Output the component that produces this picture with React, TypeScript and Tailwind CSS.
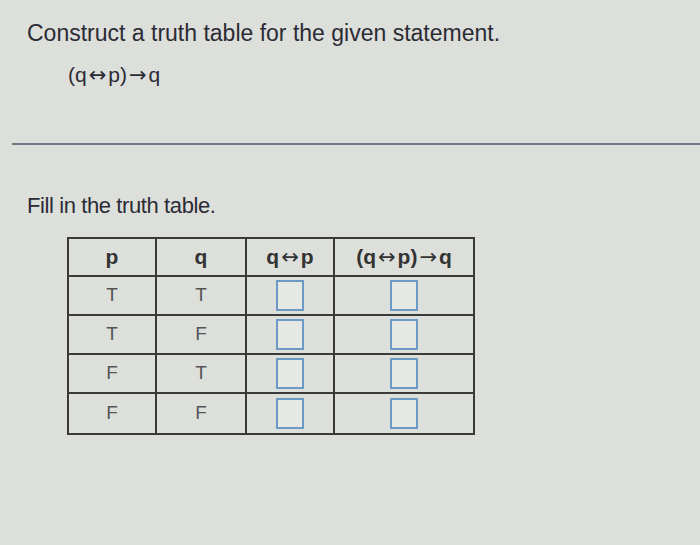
import React from "react";

const rows: [string, string][] = [
  ["T", "T"],
  ["T", "F"],
  ["F", "T"],
  ["F", "F"],
];

function A({ c }: { c: string }) {
  return (
    <span style={{ fontFamily: '"DejaVu Sans", sans-serif' }} className="mx-[2px] font-normal">
      {c}
    </span>
  );
}

function Box() {
  return <div className="w-[28px] h-[31px] border-2 border-[#6c9ac6] bg-[#e6e8e4]" />;
}

export default function App() {
  return (
    <div
      className="w-[700px] h-[545px] bg-[#dddfdb] text-[#2b2b35] overflow-hidden"
      style={{ fontFamily: '"Liberation Sans", Arial, sans-serif' }}
    >
      <div className="pt-[19px] pl-[27px] text-[23px] leading-[28px]">
        Construct a truth table for the given statement.
      </div>
      <div className="pl-[68px] pt-[16px] text-[21px] leading-[24px]">
        (q<A c="↔" />p)<A c="→" />q
      </div>
      <div className="mt-[56px] ml-[12px] h-[2px] bg-[#6f7684]" />
      <div className="pl-[27px] pt-[49px] text-[22px] leading-[24px] tracking-[-0.4px]">
        Fill in the truth table.
      </div>
      <div className="pl-[67px] pt-[19px]">
        <div className="w-[408px] border-2 border-[#3a3a3a]">
          <div className="grid grid-cols-[88px_90px_88px_1fr] h-[38px] border-b-2 border-[#3a3a3a] text-[21px] font-bold text-[#333]">
            <div className="flex items-center justify-center border-r-2 border-[#3a3a3a]">p</div>
            <div className="flex items-center justify-center border-r-2 border-[#3a3a3a]">q</div>
            <div className="flex items-center justify-center border-r-2 border-[#3a3a3a]">
              <span>q<A c="↔" />p</span>
            </div>
            <div className="flex items-center justify-center">
              <span>(q<A c="↔" />p)<A c="→" />q</span>
            </div>
          </div>
          {rows.map(([p, q], i) => (
            <div
              key={i}
              className={`grid grid-cols-[88px_90px_88px_1fr] h-[39px] text-[19px] text-[#555] ${
                i < 3 ? "border-b-2 border-[#3a3a3a]" : ""
              }`}
            >
              <div className="flex items-center justify-center border-r-2 border-[#3a3a3a]">{p}</div>
              <div className="flex items-center justify-center border-r-2 border-[#3a3a3a]">{q}</div>
              <div className="flex items-center justify-center border-r-2 border-[#3a3a3a]">
                <Box />
              </div>
              <div className="flex items-center justify-center">
                <Box />
              </div>
            </div>
          ))}
        </div>
      </div>
    </div>
  );
}
